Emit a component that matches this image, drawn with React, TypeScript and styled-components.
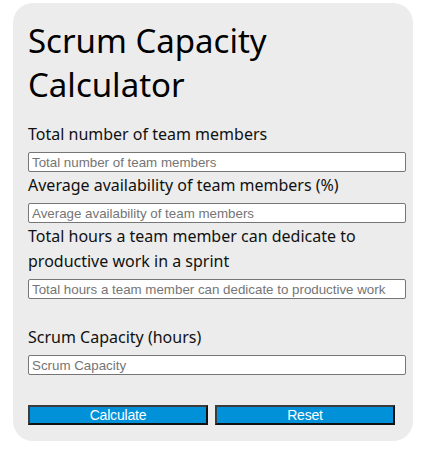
import styled, { createGlobalStyle } from 'styled-components'

const GlobalStyle = createGlobalStyle`
  html, body {
    margin: 0;
    padding: 0;
    background: #ffffff;
  }
  * {
    box-sizing: border-box;
  }
`

const Page = styled.div`
  padding: 3px 0 0 13px;
`

const Card = styled.div`
  width: 400px;
  padding: 16px 15px 16px;
  background: #ececec;
  border-radius: 20px;
  font-family: 'Noto Sans', 'Segoe UI', sans-serif;
  color: #111111;
`

const Title = styled.h1`
  margin: 0 0 15px;
  font-size: 33px;
  line-height: 44px;
  font-weight: 400;
  color: #000000;
`

const Field = styled.div<{ $gapBefore?: number }>`
  display: flex;
  flex-direction: column;
  margin-top: ${({ $gapBefore }) => $gapBefore ?? 0}px;
  margin-bottom: 1px;
`

const Label = styled.label`
  font-size: 16px;
  line-height: 25px;
  margin-bottom: 5px;
`

const Input = styled.input`
  width: 378px;
  height: 20px;
  padding: 0 3px;
  border: 1px solid #767676;
  border-radius: 2px;
  background: #ffffff;
  font-family: 'Liberation Sans', Arial, sans-serif;
  font-size: 13.333px;
  color: #000000;

  &::placeholder {
    color: #757575;
  }
`

const Actions = styled.div`
  display: flex;
  gap: 7px;
  margin-top: 30px;
`

const Button = styled.button`
  width: 180px;
  height: 20px;
  padding: 0;
  background: #0091d9;
  color: #ffffff;
  border: 2px solid;
  border-color: #3c3c3c #111111 #111111 #3c3c3c;
  font-family: 'Liberation Sans', Arial, sans-serif;
  font-size: 14px;
  letter-spacing: -0.2px;
  line-height: 16px;
  cursor: pointer;
`

const fields = [
  { label: 'Total number of team members', placeholder: 'Total number of team members' },
  { label: 'Average availability of team members (%)', placeholder: 'Average availability of team members' },
  {
    label: 'Total hours a team member can dedicate to productive work in a sprint',
    placeholder: 'Total hours a team member can dedicate to productive work',
  },
]

export default function App() {
  return (
    <>
      <GlobalStyle />
      <Page>
        <Card>
          <Title>Scrum Capacity Calculator</Title>
          {fields.map((f) => (
            <Field key={f.label}>
              <Label>{f.label}</Label>
              <Input type="number" placeholder={f.placeholder} />
            </Field>
          ))}
          <Field $gapBefore={26}>
            <Label>Scrum Capacity (hours)</Label>
            <Input type="text" placeholder="Scrum Capacity" readOnly />
          </Field>
          <Actions>
            <Button type="button">Calculate</Button>
            <Button type="button">Reset</Button>
          </Actions>
        </Card>
      </Page>
    </>
  )
}
